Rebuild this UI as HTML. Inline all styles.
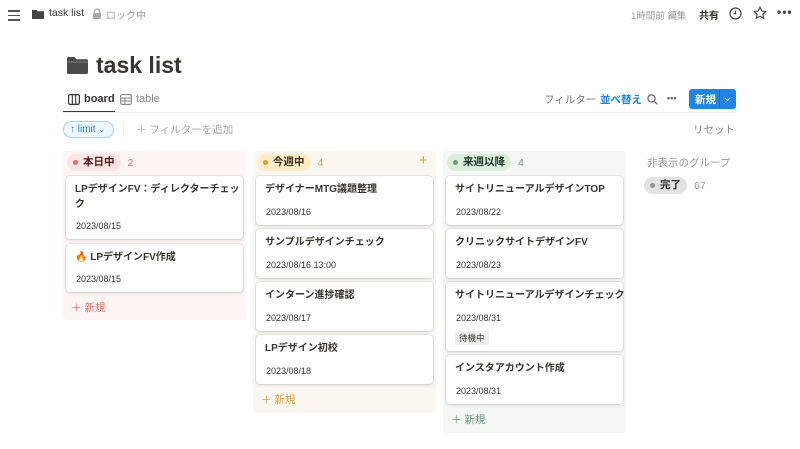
<!DOCTYPE html>
<html><head><meta charset="utf-8"><style>
*{box-sizing:border-box;margin:0;padding:0}
body{width:800px;height:449px;background:#fff;font-family:"Liberation Sans","Noto Sans CJK JP",sans-serif;color:#37352f;position:relative;overflow:hidden}
.a{position:absolute;white-space:nowrap}
.col{position:absolute;border-radius:4px}
.card{position:absolute;left:3px;width:177px;background:#fff;border-radius:4px;box-shadow:0 0 0 1px rgba(15,15,15,.08),0 2px 3px rgba(15,15,15,.08)}
.card .t{position:absolute;left:9px;top:7px;font-size:10px;font-weight:bold;color:#37352f;line-height:14px;white-space:nowrap}
.card .d{position:absolute;left:10px;font-size:9px;color:#37352f;white-space:nowrap}
.hd{position:absolute;left:4px;top:3px;display:flex;align-items:center;height:17px;white-space:nowrap}
.pill{position:relative;height:17px;border-radius:9px;font-size:10.5px;font-weight:bold;padding:0 6px 0 16px;line-height:17px}
.pill i{position:absolute;left:6px;top:6px;width:5px;height:5px;border-radius:3px}
.cnt{font-size:10.5px;margin-left:7px}
.new{position:absolute;font-size:10.5px;white-space:nowrap}
</style></head><body>
<!-- top bar -->
<div class="a" style="left:8px;top:8px;width:12px;">
<div style="height:1.5px;background:#555;margin-top:2px"></div><div style="height:1.5px;background:#555;margin-top:3px"></div><div style="height:1.5px;background:#555;margin-top:3px"></div></div>
<svg class="a" style="left:32px;top:9px" width="12" height="10" viewBox="0 0 12 10"><path d="M0 1h4.5l1 1.2H12V10H0z" fill="#444"/></svg>
<div class="a" style="left:49px;top:7px;font-size:10.5px">task list</div>
<svg class="a" style="left:93px;top:8px" width="8" height="11" viewBox="0 0 8 11"><path d="M1.5 5V3.5a2.5 2.5 0 015 0V5" stroke="#aaa" fill="none" stroke-width="1.3"/><rect x="0" y="5" width="8" height="6" rx="1" fill="#aaa"/></svg>
<div class="a" style="left:106px;top:7px;font-size:10px;color:#999">ロック中</div>
<div class="a" style="left:631px;top:8px;font-size:9.5px;color:#999">1時間前 編集</div>
<div class="a" style="left:699px;top:7px;font-size:10px;font-weight:bold">共有</div>
<svg class="a" style="left:729px;top:7px" width="13" height="13" viewBox="0 0 13 13"><circle cx="6.5" cy="6.5" r="5.5" stroke="#444" fill="none" stroke-width="1.2"/><path d="M6.5 3.5v3.2H4.5" stroke="#444" fill="none" stroke-width="1.2"/></svg>
<svg class="a" style="left:753px;top:6px" width="14" height="14" viewBox="0 0 14 14"><path d="M7 1l1.8 4 4.2.4-3.2 2.8 1 4.2L7 10.2 3.2 12.4l1-4.2L1 5.4l4.2-.4z" stroke="#444" fill="none" stroke-width="1.1" stroke-linejoin="round"/></svg>
<div class="a" style="left:777px;top:5px;font-size:12px;letter-spacing:1px;font-weight:bold;color:#444">•••</div>
<!-- title -->
<svg class="a" style="left:67px;top:57px" width="21" height="17" viewBox="0 0 21 17"><path d="M0 1.5A1.5 1.5 0 011.5 0h6l2 2.3H19.5A1.5 1.5 0 0121 3.8V15.5A1.5 1.5 0 0119.5 17h-18A1.5 1.5 0 010 15.5z" fill="#4a4a48"/><path d="M0 5h21" stroke="#fff" stroke-width=".8" opacity=".4"/></svg>
<div class="a" style="left:96px;top:52px;font-size:23px;font-weight:bold;color:#37352f">task list</div>
<!-- tabs -->
<svg class="a" style="left:68px;top:94px" width="12" height="11" viewBox="0 0 12 11"><rect x=".6" y=".6" width="10.8" height="9.8" rx="1.5" stroke="#37352f" fill="none" stroke-width="1.2"/><path d="M4.3 1v9M7.7 1v9" stroke="#37352f" stroke-width="1.1"/></svg>
<div class="a" style="left:84px;top:93px;font-size:11px;font-weight:bold">board</div>
<div class="a" style="left:63px;top:111px;width:52px;height:2px;background:#37352f"></div>
<svg class="a" style="left:120px;top:94px" width="12" height="11" viewBox="0 0 12 11"><rect x=".6" y=".6" width="10.8" height="9.8" rx="1.5" stroke="#888" fill="none" stroke-width="1.1"/><path d="M1 4h10M1 7h10M5 4v6" stroke="#888" stroke-width="1"/></svg>
<div class="a" style="left:136px;top:93px;font-size:11px;color:#888">table</div>
<div class="a" style="left:63px;top:112px;width:673px;height:1px;background:#eee"></div>
<div class="a" style="left:544px;top:92px;font-size:10.5px;color:#777">フィルター</div>
<div class="a" style="left:600px;top:92px;font-size:10.5px;color:#2383e2;font-weight:bold">並べ替え</div>
<svg class="a" style="left:647px;top:94px" width="11" height="11" viewBox="0 0 11 11"><circle cx="4.5" cy="4.5" r="3.6" stroke="#666" fill="none" stroke-width="1.2"/><path d="M7.2 7.2L10.3 10.3" stroke="#666" stroke-width="1.3"/></svg>
<div class="a" style="left:667px;top:93px;font-size:9px;color:#666;font-weight:bold">•••</div>
<div class="a" style="left:689px;top:89px;width:47px;height:20px;background:#2383e2;border-radius:3px"></div>
<div class="a" style="left:695px;top:92px;font-size:10.5px;color:#fff;font-weight:bold">新規</div>
<div class="a" style="left:719px;top:90px;width:1px;height:18px;background:#1a6fc4"></div>
<svg class="a" style="left:724px;top:97px" width="7" height="5" viewBox="0 0 7 5"><path d="M1 1l2.5 2.5L6 1" stroke="#fff" fill="none" stroke-width="1.1"/></svg>
<!-- filter row -->
<div class="a" style="left:63px;top:121px;width:51px;height:17px;border:1px solid #a8cff5;background:#eef6fe;border-radius:9px;font-size:10px;color:#2383e2;line-height:15px;padding-left:6px">↑ limit <span style="font-size:8px">⌄</span></div>
<div class="a" style="left:123px;top:121px;width:1px;height:17px;background:#eee"></div>
<div class="a" style="left:136px;top:122px;font-size:10.5px;color:#aaa">＋ フィルターを追加</div>
<div class="a" style="left:693px;top:122px;font-size:10.5px;color:#888">リセット</div>
<!-- col1 -->
<div class="col" style="left:63px;top:151px;width:183px;height:169px;background:#fdf5f3">
<div class="hd"><div class="pill" style="background:#fbe4e4;color:#5d1715"><i style="background:#e16f64"></i>本日中</div><span class="cnt" style="color:#e16f64">2</span></div>
<div class="card" style="top:25px;height:63px"><div class="t" style="top:6px;line-height:15px">LPデザインFV：ディレクターチェッ<br>ク</div><div class="d" style="top:45px">2023/08/15</div></div>
<div class="card" style="top:93px;height:48px"><div class="t">🔥 LPデザインFV作成</div><div class="d" style="top:30px">2023/08/15</div></div>
<div class="new" style="left:8px;top:149px;color:#e16f64">＋ 新規</div>
</div>
<!-- col2 -->
<div class="col" style="left:253px;top:151px;width:183px;height:262px;background:#faf7f1">
<div class="hd"><div class="pill" style="background:#fdecc8;color:#402c1b"><i style="background:#d9a03f"></i>今週中</div><span class="cnt" style="color:#d9a03f">4</span></div>
<div class="a" style="left:166px;top:1px;color:#d9a03f;font-size:15px">+</div>
<div class="card" style="top:25px;height:49px"><div class="t">デザイナーMTG議題整理</div><div class="d" style="top:31px">2023/08/16</div></div>
<div class="card" style="top:78px;height:49px"><div class="t">サンプルデザインチェック</div><div class="d" style="top:31px">2023/08/16 13:00</div></div>
<div class="card" style="top:131px;height:49px"><div class="t">インターン進捗確認</div><div class="d" style="top:31px">2023/08/17</div></div>
<div class="card" style="top:184px;height:49px"><div class="t">LPデザイン初校</div><div class="d" style="top:31px">2023/08/18</div></div>
<div class="new" style="left:8px;top:241px;color:#d9a03f">＋ 新規</div>
</div>
<!-- col3 -->
<div class="col" style="left:443px;top:151px;width:183px;height:282px;background:#f4f7f3">
<div class="hd"><div class="pill" style="background:#dbeddb;color:#1c3829"><i style="background:#6c9b7d"></i>来週以降</div><span class="cnt" style="color:#6c9b7d">4</span></div>
<div class="card" style="top:25px;height:49px"><div class="t">サイトリニューアルデザインTOP</div><div class="d" style="top:31px">2023/08/22</div></div>
<div class="card" style="top:78px;height:49px"><div class="t">クリニックサイトデザインFV</div><div class="d" style="top:31px">2023/08/23</div></div>
<div class="card" style="top:131px;height:69px"><div class="t">サイトリニューアルデザインチェック</div><div class="d" style="top:31px">2023/08/31</div><div class="a" style="left:9px;top:49px;background:#eee;border-radius:3px;font-size:8.5px;padding:1px 4px">待機中</div></div>
<div class="card" style="top:204px;height:49px"><div class="t">インスタアカウント作成</div><div class="d" style="top:31px">2023/08/31</div></div>
<div class="new" style="left:8px;top:261px;color:#6c9b7d">＋ 新規</div>
</div>
<!-- hidden -->
<div class="a" style="left:647px;top:155px;font-size:10.5px;color:#999">非表示のグループ</div>
<div class="hd" style="left:644px;top:177px"><div class="pill" style="background:#e3e2e0;color:#32302c"><i style="background:#91918e"></i>完了</div><span class="cnt" style="color:#999">67</span></div>
</body></html>
